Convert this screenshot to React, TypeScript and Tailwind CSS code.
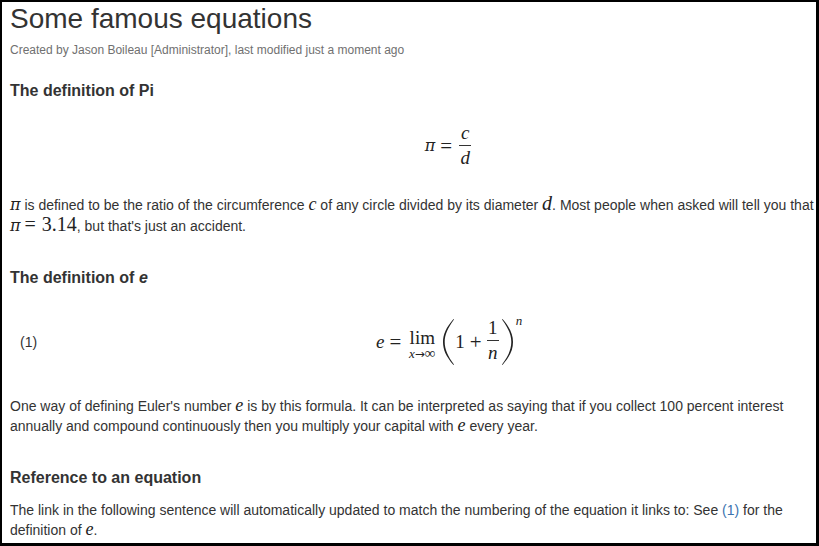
const serif = "font-['Liberation_Serif',serif] text-[#222]";

function Var({ children, size = "text-[18px]" }: { children: React.ReactNode; size?: string }) {
  return <span className={`${serif} italic leading-none ${size}`}>{children}</span>;
}

function Pi() {
  return <span className="font-['DejaVu_Serif',serif] italic text-[#222] text-[16px] leading-none">π</span>;
}

function Paren({ flip = false }: { flip?: boolean }) {
  return (
    <svg width="14" height="48" viewBox="0 0 14 50" preserveAspectRatio="none" className={flip ? "-scale-x-100" : ""}>
      <path d="M12.5 1 C5 10 2 17 2 25 C2 33 5 40 12.5 49 L13 48.5 C7 40 3.7 33 3.7 25 C3.7 17 7 10 13 1.5 Z" fill="#222" />
    </svg>
  );
}

function Frac({ top, bottom, italicTop = true, shift }: { top: string; bottom: string; italicTop?: boolean; shift: string }) {
  return (
    <span className={`${serif} ${shift} inline-flex flex-col items-center text-[19px] leading-[20px]`}>
      <span className={`${italicTop ? "italic" : ""} px-[1px]`}>{top}</span>
      <span className="block w-[12px] h-px bg-[#333] mt-[2px] mb-[2px]" />
      <span className="italic px-[1px]">{bottom}</span>
    </span>
  );
}

export default function App() {
  return (
    <div className="w-[819px] h-[546px] overflow-hidden bg-white border-black border-t-2 border-l-2 border-r-[3px] border-b-[3px] pl-2 font-['Liberation_Sans',sans-serif] text-[14px] leading-[20px] text-[#333]">
      <h1 className="text-[28px] leading-[34px] text-[#333]">Some famous equations</h1>
      <p className="text-[12px] leading-[16px] text-[#707070] mt-[6px]">
        Created by Jason Boileau [Administrator], last modified just a moment ago
      </p>

      <h2 className="text-[16px] leading-[20px] font-bold mt-[23px]">The definition of Pi</h2>
      <div className="flex justify-center items-center h-[46px] mt-[22px] gap-[7px] pl-[70px]">
        <span className={`${serif} text-[19px] flex items-center gap-[5px]`}>
          <Pi />
          <span className="text-[21px] leading-none">=</span>
        </span>
        <Frac top="c" bottom="d" shift="-mt-[2px]" />
      </div>
      <p className="mt-[24px] whitespace-nowrap">
        <Pi /> is defined to be the ratio of the circumference <Var>c</Var> of any circle divided by its diameter{" "}
        <Var size="text-[20px]">d</Var>. Most people when asked will tell you that
      </p>
      <p className="whitespace-nowrap -mt-[1px]">
        <Pi />
        <span className={`${serif} text-[20px] leading-none ml-[4px]`}>=</span>
        <span className={`${serif} text-[20px] leading-none ml-[6px]`}>3.14</span>, but that's just an accident.
      </p>

      <h2 className="text-[16px] leading-[20px] font-bold mt-[32px]">
        The definition of <em>e</em>
      </h2>
      <div className="flex items-center h-[52px] mt-[28px]">
        <span className="pl-[10px] w-[366px] shrink-0">(1)</span>
        <div className={`${serif} flex items-center text-[19px]`}>
          <i>e</i>
          <span className="ml-[5px] mr-[6px] text-[21px] leading-none">=</span>
          <span className="inline-flex flex-col items-center leading-[16px] mt-[6px] w-[30px]">
            <span>lim</span>
            <span className="text-[13px] leading-[14px] italic whitespace-nowrap">
              x<span className="font-['DejaVu_Sans',sans-serif] not-italic text-[12px]">→</span><span className="text-[15px] not-italic">∞</span>
            </span>
          </span>
          <span className="ml-[4px] flex"><Paren /></span>
          <span>1</span>
          <span className="ml-[5px] mr-[5px] text-[21px] leading-none">+</span>
          <Frac top="1" bottom="n" italicTop={false} shift="-mt-[4px]" />
          <span className="ml-[2px] flex"><Paren flip /></span>
          <span className="self-start text-[13px] italic leading-[14px] ml-[1px] -mt-[4px]">n</span>
        </div>
      </div>
      <p className="mt-[28px]">
        One way of defining Euler's number <Var>e</Var> is by this formula. It can be interpreted as saying that if you collect 100 percent interest
        <br />
        annually and compound continuously then you multiply your capital with <Var>e</Var> every year.
      </p>

      <h2 className="text-[16px] leading-[20px] font-bold mt-[32px]">Reference to an equation</h2>
      <p className="mt-[12px]">
        The link in the following sentence will automatically updated to match the numbering of the equation it links to: See{" "}
        <a className="text-[#3b73af]">(1)</a> for the
        <br />
        definition of <Var>e</Var>.
      </p>
    </div>
  );
}
